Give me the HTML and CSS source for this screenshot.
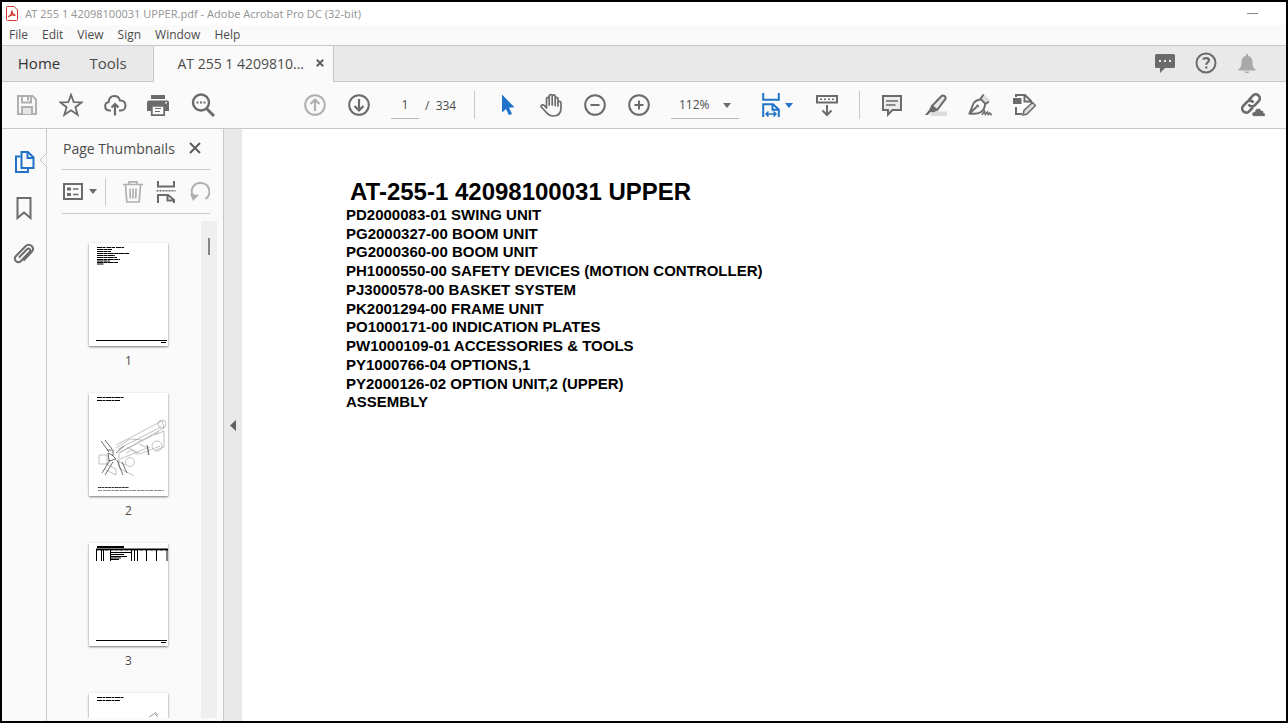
FILE: index.html
```html
<!DOCTYPE html>
<html lang="en">
<head>
<meta charset="utf-8">
<title>AT 255 1 42098100031 UPPER.pdf - Adobe Acrobat Pro DC (32-bit)</title>
<link rel="stylesheet" href="styles.css">
</head>
<body>
<div class="window">
  <header class="titlebar">
    <svg class="app-icon" width="12" height="15" viewBox="0 0 12 15" fill="none" stroke="#d3342c"><path d="M1.500.5h6.500l3.500 3.500v9.500a1 1 0 0 1-1 1h-9a1 1 0 0 1-1-1v-12a1 1 0 0 1 1-1z"/><path d="M2.500 10.800c2-1 3.500-4 3.300-6.300M5.800 4.500c0 2.300 1.500 4.200 3.700 5M2.500 10.800c1-1.600 4-2.600 7-1.300" stroke-width="1.400"/></svg>
    <span class="window-title">AT 255 1 42098100031 UPPER.pdf - Adobe Acrobat Pro DC (32-bit)</span>
    <button class="minimize" aria-label="Minimize"></button>
  </header>
  <nav class="menubar" aria-label="Menu">
    <button>File</button><button>Edit</button><button>View</button><button>Sign</button><button>Window</button><button>Help</button>
  </nav>
  <div class="tabbar">
    <button class="tab tab-home">Home</button>
    <button class="tab tab-tools">Tools</button>
    <div class="tab-document">
      <button class="tab-name">AT 255 1 4209810...</button>
      <button class="tab-close" aria-label="Close tab"><svg width="8" height="8" viewBox="0 0 8 8" stroke="#5f5f5f" stroke-width="2"><path d="M.8.8l6.400 6.400M7.200.8L.8 7.200"/></svg></button>
    </div>
    <div class="tab-actions">
      <button aria-label="Comments"><svg width="24" height="24" viewBox="0 0 24 24"><path d="M3.500 3h17a1.500 1.500 0 0 1 1.500 1.500v11a1.500 1.500 0 0 1-1.500 1.500H12l-5 5v-5H3.500A1.500 1.500 0 0 1 2 15.500v-11A1.500 1.500 0 0 1 3.500 3z" fill="#6b6b6b"/><path d="M6 10h2M11 10h2M16 10h2" stroke="#eee" stroke-width="2"/></svg></button>
      <button aria-label="Help"><svg width="24" height="24" viewBox="0 0 24 24" fill="none" stroke="#6b6b6b" stroke-width="2"><circle cx="12" cy="12" r="9.500"/><path d="M9 8.500c1-1.700 6-2 6 .8 0 2-2.700 2-2.700 4.500M12.300 15.500v2" stroke-width="2.200"/></svg></button>
      <button aria-label="Notifications"><svg width="24" height="24" viewBox="0 0 24 24" fill="#a9a9a9"><path d="M11 3h2v2c3.500.7 4.500 3 4.500 6 0 4 .5 5.500 3 7.500v1h-17v-1c2.500-2 3-3.500 3-7.500 0-3 1-5.300 4.500-6zM9.500 20.500h5c-.5 2-4.500 2-5 0z"/></svg></button>
    </div>
  </div>
  <div class="toolbar">
    <div class="group">
      <button aria-label="Save"><svg class="icon dim" viewBox="0 0 24 24"><path d="M3 3h14.500L21 6.500V21H3zM7 3v6.500h9V3M13 4v3.500"/><path d="M7 21v-7h10v7" fill="#e6e6e6"/></svg></button>
      <button aria-label="Star"><svg class="icon" viewBox="0 0 24 24"><path d="M12 1.800l2.700 7.400 8 .2-6.300 4.800 2.300 7.600-6.700-4.500-6.700 4.500 2.300-7.600L1.300 9.400l8-.2z" stroke-width="1.800"/></svg></button>
      <button aria-label="Upload"><svg class="icon" viewBox="0 0 24 24"><path d="M8 17.500H6a4.300 4.300 0 0 1-.3-8.500C5.500 5.500 8 3 11.300 3c3 0 5 1.800 5.700 4.500 3.500-.3 5.500 2 5.500 4.900 0 3-2 5.100-4.500 5.100h-2"/><path d="M12 22.500V11M8.500 14.500L12 11l3.500 3.500" stroke-width="2.200"/></svg></button>
      <button aria-label="Print"><svg class="icon" viewBox="0 0 24 24"><path d="M4 2h14v4H4zM2 7.500h18a2 2 0 0 1 2 2V18H0V9.500a2 2 0 0 1 2-2z" fill="#6b6b6b" stroke="none"/><path d="M4.800 12.800h12.400v9.400H4.800z" fill="#fafafa" stroke-width="1.800"/><path d="M8 15.500h6M8 18.500h5" stroke-width="1.200"/><path d="M18 9.800h2" stroke="#eee" stroke-width="1.500"/></svg></button>
      <button aria-label="Find"><svg class="icon" viewBox="0 0 24 24"><circle cx="10" cy="9.500" r="8" stroke-width="2.400"/><path d="M15.500 15.500l7.500 7.500" stroke-width="3"/><path d="M5.500 9.500h2M9 9.500h2M12.500 9.500h2" stroke-width="2"/></svg></button>
    </div>
    <div class="group pages">
      <button aria-label="Previous page"><svg class="icon dim" viewBox="0 0 24 24"><circle cx="12" cy="12" r="9.800"/><path d="M12 18V7M7.500 11L12 6.500l4.500 4.500" stroke-width="2.200"/></svg></button>
      <button aria-label="Next page"><svg class="icon" viewBox="0 0 24 24"><circle cx="12" cy="12" r="9.800"/><path d="M12 6v11M7.500 13l4.500 4.500 4.500-4.500" stroke-width="2.200"/></svg></button>
      <input class="page-number" aria-label="Page number" value="1">
      <span class="page-total">/&nbsp; 334</span>
    </div>
    <span class="divider"></span>
    <div class="group">
      <button aria-label="Select"><svg class="icon" viewBox="0 0 24 24"><path d="M7 1.500v18l4-3.600 3 6.300 3-1.400-3-6.100 5.500-.4z" fill="#2073c8" stroke="none"/></svg></button>
      <button aria-label="Hand"><svg class="icon" viewBox="0 0 24 24"><path d="M7.500 15V6c0-2.300 2.700-2.300 2.700 0v6V3.300c0-2.400 3-2.400 3 0V12 3.500c0-2.300 3-2.300 3 0V12.500 6c0-2.200 2.800-2.200 2.800 0v7-3c0-2.200 3-2.200 3 0V15c0 5-3 8-7.800 8-3.800 0-5.500-1.500-7.700-4.500L2.300 14c-1-1.800 1.500-3 3-1.500z" stroke-width="1.700" stroke-linejoin="round"/></svg></button>
      <button aria-label="Zoom out"><svg class="icon" viewBox="0 0 24 24"><circle cx="12" cy="12" r="9.800"/><path d="M7.500 12h9"/></svg></button>
      <button aria-label="Zoom in"><svg class="icon" viewBox="0 0 24 24"><circle cx="12" cy="12" r="9.800"/><path d="M7.500 12h9M12 7.500v9"/></svg></button>
    </div>
    <div class="zoom-box">
      <select class="zoom" aria-label="Zoom level"><option>112%</option></select>
      <svg class="zoom-arrow" width="8" height="5" viewBox="0 0 8 5"><path d="M0 0h8L4 5z" fill="#6b6b6b"/></svg>
    </div>
    <div class="group">
      <button class="fit" aria-label="Fit width"><svg class="icon blue" viewBox="0 0 24 24"><path d="M4.200 0v6.800h15.600V0M4.200 24V11.200H14l5.800 5.200V24M13.500 11.500v5.200h6"/><path d="M7 21h10M9.500 18.500L7 21l2.500 2.500M14.500 18.500L17 21l-2.500 2.500" stroke-width="1.500"/></svg><svg width="8" height="5" viewBox="0 0 8 5"><path d="M0 0h8L4 5z" fill="#2073c8"/></svg></button>
      <button aria-label="Scrolling"><svg class="icon" viewBox="0 0 24 24"><path d="M2 3h20v6.500H2z"/><path d="M5 6.300h2M9 6.300h2M13 6.300h2M17 6.300h2" stroke-width="1.500"/><path d="M12 12v10M7.500 17.500L12 22l4.500-4.500"/></svg></button>
    </div>
    <span class="divider"></span>
    <div class="group">
      <button aria-label="Add comment"><svg class="icon" viewBox="0 0 24 24"><path d="M3 3h18v14h-8.500L8 21.500V17H3z" fill="#ececec"/><path d="M6 8h12M6 12h9.500" stroke-width="1.400"/></svg></button>
      <button aria-label="Highlight"><svg class="icon" viewBox="0 0 24 24"><path d="M8 18.500h15V23H6z" fill="#dcdcdc" stroke="none"/><path d="M8 13L17.500 3c2-1.500 5 .8 3.800 3.200L13 17z" fill="#e8e8e8" stroke-width="2"/><path d="M7.500 12l5.800 5-3 2.300-3.500-.2-3 2.900H1l4-5z" fill="#6b6b6b" stroke="none"/></svg></button>
      <button aria-label="Sign"><svg class="icon" viewBox="0 0 24 24"><path d="M12.500 5l3-4 6.500 6-4 3.500z" fill="#dcdcdc" stroke="none"/><path d="M15.500 1.500L12.500 6l5 5 3.500-2.500M12.500 6.500c-3 .5-5.500 1.500-7 4L1.500 20.500c3.500.5 8.500.5 11.500-1.500 2.500-2 4-5 4-8M1.500 20.500L8.500 14" stroke-width="1.900"/><circle cx="9.500" cy="13" r="1" stroke-width="1.200"/><path d="M14 22l2.500-4 .8 3.500 2.200-2.500.7 2.500 1.600-1.500.7 1.500H24" stroke-width="1.500"/></svg></button>
      <button aria-label="Organize"><svg class="icon" viewBox="0 0 24 24"><path d="M4 4V2h9l6 6v2M12.500 2v6.500H19M4 14v7h6"/><path d="M1 5h8.500v6H1z" fill="#6b6b6b" stroke="none"/><path d="M11 22l1-4.500L20.500 9.500l3 3L15 21z" fill="#ddd" stroke-width="1.500"/></svg></button>
    </div>
    <button class="share" aria-label="Share link"><svg class="icon" viewBox="0 0 24 24"><g transform="rotate(-47 10 10.500)" stroke-width="2.600"><path d="M9 14.500H3a4 4 0 0 1 0-8h5.500a4 4 0 0 1 3.800 5.200M11 6.500h6a4 4 0 0 1 0 8h-5.500A4 4 0 0 1 7.700 9.300"/></g><path d="M13.500 23.500c-3.500 0-3.500-4.700.2-4.800.5-3.800 5.300-4.500 6.700-1.300 2 0 2.500 1.200 2.300 2.400 2.500.5 2.200 3.700 0 3.700z" fill="#6b6b6b" stroke="#fafafa" stroke-width=".8"/></svg></button>
  </div>
  <div class="workspace">
    <aside class="rail">
      <button aria-label="Page Thumbnails"><svg class="icon blue" viewBox="0 0 24 24"><path d="M9.500 2h6.500l5.500 5.500V18h-12zM15.500 2v6h6" /><path d="M8.500 6.500H4V22h12v-3"/></svg></button>
      <button aria-label="Bookmarks"><svg class="icon" viewBox="0 0 24 24"><path d="M5.500 2h13v20L12 16.500 5.500 22z"/></svg></button>
      <button aria-label="Attachments"><svg class="icon" viewBox="0 0 24 24"><path d="M7 15.500l8-8.300c2-1.800 4.500.7 2.700 2.500L9 19c-3.500 3.300-8.500-1.500-5-5L13.500 4.300c4.500-4 10 1.500 6 5.800L11.500 18.500" stroke-width="2"/></svg></button>
      <svg class="notch" width="8" height="14" viewBox="0 0 8 14"><path d="M7.500 0v.500L1 7l6.500 6.500V14" fill="#fafafa" stroke="#c8c8c8"/></svg>
    </aside>
    <section class="panel">
      <div class="panel-head">
        <h2>Page Thumbnails</h2>
        <button aria-label="Close panel"><svg width="12" height="12" viewBox="0 0 12 12" stroke="#5f5f5f" stroke-width="2"><path d="M1 1l10 10M11 1L1 11"/></svg></button>
      </div>
      <div class="panel-tools">
        <button class="options" aria-label="Options"><svg width="20" height="18" viewBox="0 0 20 18" fill="none" stroke="#6b6b6b" stroke-width="2"><path d="M1 1h18v15H1z"/><path d="M4 6h4M4 11.500h4" stroke-width="3"/><path d="M10 6h5.500M10 11.500h5.500" stroke-width="1.500"/></svg><svg width="8" height="5" viewBox="0 0 8 5"><path d="M0 0h8L4 5z" fill="#6b6b6b"/></svg></button>
        <span class="divider short"></span>
        <button class="trash" aria-label="Delete pages"><svg class="icon dim" viewBox="0 0 24 24"><path d="M2 4.500h20M8 4V1.800h8V4M4.500 5l1.300 17h12.400l1.300-17M9 8.500l.3 10M12 8.500v10M15 8.500l-.3 10" stroke-width="1.700"/></svg></button>
        <button aria-label="Extract pages"><svg class="icon" viewBox="0 0 24 24"><path d="M4 1v5.500h16V1M4 23v-8h10l6 5v3M13.500 15v5.500H20"/><path d="M2.500 10.800h19" stroke-dasharray="2 1" stroke-width="1.500"/></svg></button>
        <button class="rotate" aria-label="Rotate"><svg class="icon dim" viewBox="0 0 24 24"><path d="M5 16C1.500 9 6 3 12.500 3c9 0 12 11 5 16"/><path d="M2 14l9 1-6 6z" fill="#b0b0b0" stroke="none"/></svg></button>
      </div>
      <div class="panel-body">
        <ol class="thumbs">
          <li><button><svg class="page" viewBox="0 0 79 103"><g stroke="#000" fill="none"><path d="M8 4.500h27" stroke-dasharray="5 .5 3 1"/><path d="M8 6.500h15M8 8.500h14M8 10.500h32M8 12.500h18M8 14.500h20M8 16.500h23M8 18h13M8 19.500h21M8 21h7" stroke-width="1.100" stroke-dasharray="6 .4 4 .4"/><path d="M7 97.500h71" stroke-width="1.200"/><path d="M72 99.500h5"/></g></svg>1</button></li>
          <li><button><svg class="page" viewBox="0 0 79 103"><g fill="none" stroke="#000"><path d="M8 4.500h27M8 7.500h23" stroke-dasharray="5 .5 3 .5"/><path d="M9 94.500h31" stroke-dasharray="3 .4" stroke-width=".8"/><path d="M9 97.500h66" stroke-dasharray="4 1 3 .5" stroke-width=".7" stroke="#555"/></g><g fill="none" stroke="#999" stroke-width=".6"><path d="M27 52l46-24 2 7-45 25M29 56l43-22M30 60l40-21M27 55l14-9 12 1M38 54l13 7 20-8M31 66l30-12M30 61v14l15 8M10 62h8v9h-8zM17 71l10 5v6l-12-6M28 68l9 4M37 60l6-3 6 5M66 42l9-4v16l-8 3M50 51l9 4v7"/><circle cx="73" cy="31" r="4"/><circle cx="41" cy="69" r="4.500"/><circle cx="68" cy="53" r="5"/></g><g fill="none" stroke="#333" stroke-width=".7"><path d="M12 48l8 11M16 47l7 9M13 80l8-13M16 82l8-13M33 69l5 11M28 67l6 15M18 57h6v6M19 60l1 8 7-2-4-4zM27 60l8-7M58 52l2 10"/></g></svg>2</button></li>
          <li><button><svg class="page" viewBox="0 0 79 103"><g fill="none" stroke="#000"><path d="M8 4h27M7 6.500h72" stroke-width="2"/><path d="M9 7.500h69" stroke="#fff" stroke-width=".5" stroke-dasharray="2 3"/><path d="M7.500 7v11M12.500 7v11M14.500 7v11M21.500 7v11M42.500 7v11M45.500 7v11M48.500 7v11M57.500 7v11M67.500 7v11M78 7v11"/><path d="M22 9.500h20M22 11.500h13M22 13.500h16M22 15h10M22 16.500h8"/><path d="M7 97.500h71" stroke-width="1.200"/><path d="M72 99.500h5"/></g></svg>3</button></li>
          <li><button aria-label="Page 4"><svg class="page" viewBox="0 0 79 103"><g fill="none" stroke="#000"><path d="M8 4.500h27M8 7.500h23" stroke-dasharray="5 .5 3 .5"/><path d="M60 24l5-3M65 20l4 4M66 19l3 3" stroke="#555" stroke-width=".6"/></g></svg></button></li>
        </ol>
        <div class="scroll-track"><div class="scroll-thumb"></div></div>
      </div>
    </section>
    <button class="collapse" aria-label="Collapse panel"><svg width="6" height="11" viewBox="0 0 6 11"><path d="M6 0v11L0 5.500z" fill="#5f5f5f"/></svg></button>
    <main class="document">
      <h1>AT-255-1 42098100031 UPPER</h1>
      <ul>
        <li>PD2000083-01 SWING UNIT</li>
        <li>PG2000327-00 BOOM UNIT</li>
        <li>PG2000360-00 BOOM UNIT</li>
        <li>PH1000550-00 SAFETY DEVICES (MOTION CONTROLLER)</li>
        <li>PJ3000578-00 BASKET SYSTEM</li>
        <li>PK2001294-00 FRAME UNIT</li>
        <li>PO1000171-00 INDICATION PLATES</li>
        <li>PW1000109-01 ACCESSORIES &amp; TOOLS</li>
        <li>PY1000766-04 OPTIONS,1</li>
        <li>PY2000126-02 OPTION UNIT,2 (UPPER)</li>
        <li>ASSEMBLY</li>
      </ul>
    </main>
  </div>
</div>
</body>
</html>
```
FILE: styles.css
```css
* { box-sizing: border-box; }

body {
  margin: 0;
  font-family: "Open Sans", "Noto Sans", sans-serif;
  font-size: 12px;
  color: #4b4b4b;
}

button {
  display: flex;
  align-items: center;
  justify-content: center;
  padding: 0;
  border: 0;
  background: none;
  font: inherit;
  color: inherit;
}

svg { flex: none; }

.window {
  display: flex;
  flex-direction: column;
  height: 100vh;
  border: 2px solid #000;
  background: #fafafa;
}

.titlebar {
  display: flex;
  align-items: center;
  height: 23px;
  padding: 0 28px 0 4px;
  background: #fff;
  color: #999;
}

.window-title {
  flex: 1;
  margin-left: 7px;
  font-family: "Noto Sans", sans-serif;
  font-size: 11px;
}

.minimize { width: 11px; height: 12px; }
.minimize::before { content: ""; width: 11px; height: 1px; background: #888; }

.menubar {
  display: flex;
  align-items: center;
  gap: 14px;
  height: 20px;
  padding: 0 0 2px 7px;
}

.tabbar {
  display: flex;
  height: 37px;
  border-top: 1px solid #c8c8c8;
  background: #e9e9e9;
  font-size: 15px;
}

.tab, .tab-actions { padding-bottom: 2px; border-bottom: 1px solid #c8c8c8; }
.tab { color: #333; }
.tab-home { width: 74px; }
.tab-tools { width: 77px; padding-right: 13px; color: #4b4b4b; }

.tab-document {
  display: flex;
  align-items: center;
  justify-content: flex-end;
  gap: 12px;
  width: 181px;
  padding: 0 9px 2px 0;
  border: solid #c8c8c8;
  border-width: 0 1px;
  background: #fafafa;
  font-size: 14px;
}

.tab-actions {
  display: flex;
  flex: 1;
  align-items: center;
  justify-content: flex-end;
  gap: 17px;
  padding-right: 27px;
}

.toolbar {
  display: flex;
  align-items: center;
  height: 47px;
  padding: 0 11px 0 3px;
  border-bottom: 1px solid #c8c8c8;
}

.toolbar button { width: 44px; height: 40px; }
.group { display: flex; align-items: center; }
.pages { margin-left: 68px; }

.icon {
  width: 24px;
  height: 24px;
  fill: none;
  stroke: #6b6b6b;
  stroke-width: 2;
}

.icon.dim { stroke: #b0b0b0; }
.icon.blue { stroke: #2073c8; }

.page-number {
  width: 28px;
  height: 28px;
  margin: 0 6px 0 10px;
  padding: 0;
  border: 0;
  border-bottom: 1px solid #b8b8b8;
  background: none;
  font: inherit;
  color: inherit;
  text-align: center;
}

.page-total { width: 39px; }
.divider { width: 1px; height: 28px; margin: 0 10px; background: #c8c8c8; }

.zoom-box { display: flex; position: relative; margin: 0 8px 0 10px; }

.zoom {
  width: 68px;
  height: 28px;
  padding: 0 8px;
  border: 0;
  border-bottom: 1px solid #b8b8b8;
  border-radius: 0;
  appearance: none;
  background: none;
  font: inherit;
  color: inherit;
}

.zoom-arrow { position: absolute; right: 8px; top: 12px; pointer-events: none; }
.toolbar .fit { width: 58px; gap: 2px; }
.toolbar .share { margin-left: auto; }

.workspace { display: flex; flex: 1; min-height: 0; }

.rail {
  display: flex;
  position: relative;
  flex-direction: column;
  gap: 22px;
  width: 45px;
  padding-top: 21px;
  border-right: 1px solid #c8c8c8;
}

.notch { position: absolute; right: -1px; top: 24px; }

.panel {
  display: flex;
  flex-direction: column;
  width: 177px;
  padding-bottom: 3px;
  border-right: 1px solid #c8c8c8;
}

.panel-head, .panel-tools {
  display: flex;
  align-items: center;
  margin: 0 13px 0 15px;
  border-bottom: 1px solid #c8c8c8;
}

.panel-head { justify-content: space-between; height: 41px; padding: 0 9px 2px 1px; }
.panel-head h2 { margin: 0; font-size: 14px; font-weight: 400; white-space: nowrap; }
.panel-tools { height: 44px; overflow: hidden; }
.options { gap: 6px; padding-left: 1px; }
.short { margin: 0 15px 0 8px; flex: none; }
.trash { margin-right: 9px; }
.rotate { margin-left: 10px; }

.panel-body { display: flex; flex: 1; min-height: 0; padding-top: 7px; }

.thumbs {
  flex: 1;
  margin: 0;
  padding: 22px 0 0 9px;
  overflow: hidden;
  list-style: none;
}

.thumbs li { height: 150px; }
.thumbs button { flex-direction: column; gap: 6px; margin: 0 auto; }
.page { width: 79px; height: 103px; background: #fff; box-shadow: 0 1px 2px #777; }

.scroll-track { width: 16px; margin-right: 6px; padding-top: 17px; background: #efefef; }
.scroll-thumb { width: 2px; height: 17px; margin-left: 7px; background: #858585; }

.collapse { width: 18px; background: #e9e9e9; }

.document {
  flex: 1;
  padding: 48px 24px 0 104px;
  overflow: hidden;
  background: #fff;
  color: #000;
  font-family: "Liberation Sans", Arial, sans-serif;
  font-weight: 700;
}

.document h1 { margin: 0 0 0 4px; font-size: 24px; line-height: 29px; }

.document ul {
  display: grid;
  grid-auto-rows: 1fr;
  min-height: 206px;
  margin: 0;
  padding: 0;
  list-style: none;
  font-size: 15px;
  line-height: 18px;
}
```
